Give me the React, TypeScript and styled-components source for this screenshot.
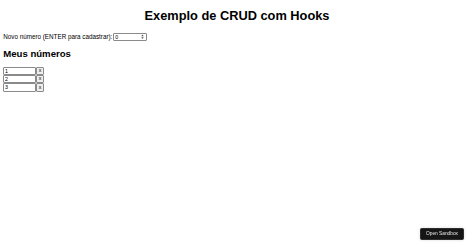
import React, { useState } from "react";
import styled, { createGlobalStyle } from "styled-components";

const Global = createGlobalStyle`
  body {
    margin: 0;
    font-family: "Liberation Sans", Arial, sans-serif;
    font-size: 6.4px;
    color: #000;
    background: #fff;
  }
`;

const Page = styled.div`
  display: flex;
  flex-direction: column;
  align-items: stretch;
  padding: 8.5px 3.2px 0;
`;

const Title = styled.h1`
  font-size: 12.8px;
  font-weight: bold;
  text-align: center;
  margin: 0 0 9.5px;
  line-height: 14.7px;
`;

const FormRow = styled.div`
  display: flex;
  align-items: center;
  height: 8.3px;
  gap: 1px;
  white-space: nowrap;
`;

const Label = styled.label`
  font-size: 6.3px;
  line-height: 8.3px;
`;

const SpinField = styled.div`
  position: relative;
  display: flex;
`;

const NumberInput = styled.input`
  box-sizing: border-box;
  width: 34px;
  height: 8.3px;
  padding: 0 0.8px;
  border: 1px solid #8a8a8a;
  border-radius: 1px;
  font-family: "Liberation Sans", Arial, sans-serif;
  font-size: 5.3px;
  outline: none;
  appearance: textfield;
  -moz-appearance: textfield;
  &::-webkit-inner-spin-button,
  &::-webkit-outer-spin-button {
    -webkit-appearance: none;
    margin: 0;
  }
`;

const Spinner = styled.svg`
  position: absolute;
  right: 3px;
  top: 1.5px;
  width: 3px;
  height: 5.3px;
  pointer-events: none;
`;

const SubTitle = styled.h2`
  font-size: 9.6px;
  font-weight: bold;
  margin: 6.6px 0 8.1px;
  line-height: 11px;
`;

const List = styled.div`
  display: flex;
  flex-direction: column;
`;

const Item = styled.div`
  display: flex;
  align-items: center;
  height: 8.3px;
`;

const ItemInput = styled.input`
  box-sizing: border-box;
  width: 33px;
  height: 8.3px;
  padding: 0 0.8px;
  border: 1px solid #8a8a8a;
  border-radius: 1px;
  font-family: "Liberation Sans", Arial, sans-serif;
  font-size: 5.3px;
  outline: none;
`;

const RemoveButton = styled.button`
  box-sizing: border-box;
  width: 8px;
  height: 8.3px;
  padding: 0;
  border: 1px solid #8a8a8a;
  border-radius: 1px;
  background: #efefef;
  font-family: "Liberation Sans", Arial, sans-serif;
  font-size: 5.3px;
  line-height: 1;
  color: #000;
`;

const SandboxButton = styled.a`
  position: fixed;
  right: 10px;
  bottom: 8px;
  box-sizing: border-box;
  height: 12.5px;
  padding: 0 5px;
  display: flex;
  align-items: center;
  background: #151515;
  border: 1px solid #2f2f2f;
  border-radius: 1.6px;
  color: #e6e6e6;
  font-family: "Liberation Sans", Arial, sans-serif;
  font-size: 4.8px;
  text-decoration: none;
  box-shadow: 0 0 3px rgba(0, 0, 0, 0.15);
`;

export default function App() {
  const [numero, setNumero] = useState("0");
  const [numeros, setNumeros] = useState<string[]>(["1", "2", "3"]);

  return (
    <Page>
      <Global />
      <Title>Exemplo de CRUD com Hooks</Title>
      <FormRow>
        <Label>Novo número (ENTER para cadastrar):</Label>
        <SpinField>
          <NumberInput
            type="number"
            value={numero}
            onChange={(e) => setNumero(e.target.value)}
            onKeyDown={(e) => {
              if (e.key === "Enter") {
                setNumeros([...numeros, numero]);
                setNumero("0");
              }
            }}
          />
          <Spinner viewBox="0 0 6 10">
            <path d="M3 0.5 L5.5 4 L0.5 4 Z" fill="#555" />
            <path d="M3 9.5 L5.5 6 L0.5 6 Z" fill="#555" />
          </Spinner>
        </SpinField>
      </FormRow>
      <SubTitle>Meus números</SubTitle>
      <List>
        {numeros.map((n, i) => (
          <Item key={i}>
            <ItemInput
              value={n}
              onChange={(e) =>
                setNumeros(numeros.map((v, j) => (j === i ? e.target.value : v)))
              }
            />
            <RemoveButton
              onClick={() => setNumeros(numeros.filter((_, j) => j !== i))}
            >
              x
            </RemoveButton>
          </Item>
        ))}
      </List>
      <SandboxButton href="#">Open Sandbox</SandboxButton>
    </Page>
  );
}
